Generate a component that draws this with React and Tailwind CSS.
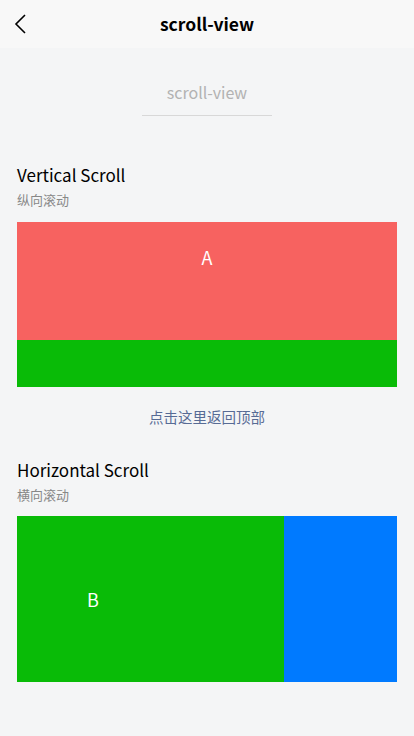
const font = { fontFamily: '"Noto Sans CJK SC", "Noto Sans", sans-serif' };

export default function App() {
  return (
    <div className="w-[414px] h-[736px] bg-[#f4f5f6] overflow-hidden" style={font}>
      <div className="h-[48px] bg-[#f8f8f8] flex items-center relative">
        <svg className="absolute left-[12px] top-[13px]" width="18" height="22" viewBox="0 0 18 22">
          <path d="M13 2 L4 11 L13 20" fill="none" stroke="#000" strokeWidth="1.6" />
        </svg>
        <div className="w-full text-center text-[17.5px] font-bold text-black">scroll-view</div>
      </div>

      <div className="flex flex-col items-center pt-[31px]">
        <div className="text-[16px] text-[#b2b2b2] leading-[26px]">scroll-view</div>
        <div className="w-[130px] h-px bg-[#d8d8d8] mt-[10px]"></div>
      </div>

      <div className="px-[17px] pt-[46px]">
        <div className="text-[17px] text-black leading-[26px]">Vertical Scroll</div>
        <div className="text-[13px] text-[#888] leading-[20px] mt-[2px]">纵向滚动</div>
        <div className="mt-[12px] h-[165px] overflow-hidden flex flex-col">
          <div className="h-[118px] bg-[#f76260] text-white text-[18px] text-center pt-[22px] shrink-0">A</div>
          <div className="h-[47px] bg-[#09bb07] shrink-0"></div>
        </div>
        <div className="text-center text-[14.5px] text-[#576b95] mt-[19px] leading-[22px]">点击这里返回顶部</div>

        <div className="text-[17px] text-black leading-[26px] mt-[29px]">Horizontal Scroll</div>
        <div className="text-[13px] text-[#888] leading-[20px] mt-[2px]">横向滚动</div>
        <div className="mt-[11px] h-[166px] flex overflow-hidden">
          <div className="w-[267px] bg-[#09bb07] text-white text-[18px] flex items-center pl-[70px] shrink-0">B</div>
          <div className="flex-1 bg-[#007aff]"></div>
        </div>
      </div>
    </div>
  );
}
